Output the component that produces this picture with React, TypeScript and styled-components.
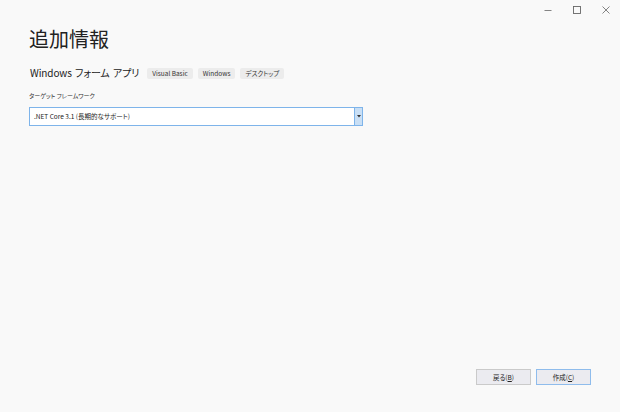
import React from "react";
import styled, { createGlobalStyle } from "styled-components";

const GlobalStyle = createGlobalStyle`
  html, body {
    margin: 0;
    padding: 0;
    background: #f9f9f9;
  }
  body {
    font-family: "Noto Sans CJK JP", "Noto Sans", sans-serif;
    font-feature-settings: "palt";
    color: #1e1e1e;
  }
`;

const Window = styled.div`
  width: 620px;
  height: 412px;
  background: #f9f9f9;
  display: flex;
  flex-direction: column;
  box-sizing: border-box;
`;

const TitleBar = styled.div`
  height: 20px;
  display: flex;
  justify-content: flex-end;
`;

const Control = styled.div`
  width: 29px;
  height: 20px;
  display: flex;
  align-items: center;
  justify-content: center;
`;

const Content = styled.div`
  flex: 1;
  padding: 6px 29px 0 29px;
  display: flex;
  flex-direction: column;
`;

const Title = styled.h1`
  margin: 0;
  font-size: 20px;
  font-weight: 400;
  line-height: 26px;
  color: #222;
`;

const TemplateRow = styled.div`
  margin-top: 14px;
  display: flex;
  align-items: center;
  height: 14px;
`;

const TemplateName = styled.span`
  font-size: 10px;
  line-height: 14px;
  margin-left: 1px;
  margin-right: 8px;
  color: #222;
  letter-spacing: -0.1px;
  word-spacing: 1px;
`;

const Tag = styled.span`
  background: #ececec;
  border-radius: 2px;
  font-size: 6.5px;
  line-height: 11px;
  height: 11px;
  padding: 0 5px;
  margin-right: 5px;
  color: #333;
  white-space: nowrap;
`;

const Label = styled.div`
  margin-top: 11px;
  font-size: 6px;
  line-height: 10px;
  color: #333;
`;

const Select = styled.div`
  margin-top: 6px;
  width: 334px;
  height: 19px;
  box-sizing: border-box;
  border: 1px solid #7eb4ea;
  background: #fff;
  display: flex;
  align-items: stretch;
`;

const SelectText = styled.div`
  flex: 1;
  padding-left: 4px;
  font-size: 6.5px;
  line-height: 17px;
  color: #222;
`;

const SelectButton = styled.div`
  width: 7px;
  border-left: 1px solid #7eb4ea;
  background: #c9dff5;
  display: flex;
  align-items: center;
  justify-content: center;
`;

const Spacer = styled.div`
  flex: 1;
`;

const Footer = styled.div`
  display: flex;
  justify-content: flex-end;
  gap: 5px;
  padding-bottom: 27px;
`;

const Button = styled.button<{ $primary?: boolean }>`
  width: 55px;
  height: 16px;
  box-sizing: border-box;
  padding: 0;
  border: 1px solid ${(p) => (p.$primary ? "#8fbcec" : "#cacaca")};
  background: #ebebf0;
  font-family: "Noto Sans CJK JP", "Noto Sans", sans-serif;
  font-feature-settings: "palt";
  font-size: 6.5px;
  line-height: 14px;
  color: #222;
  display: flex;
  align-items: center;
  justify-content: center;
`;

const Key = styled.span`
  text-decoration: underline;
`;

const App: React.FC = () => (
  <Window>
    <GlobalStyle />
    <TitleBar>
      <Control>
        <svg width="8" height="8" viewBox="0 0 8 8">
          <line x1="0.5" y1="4.5" x2="7.5" y2="4.5" stroke="#666" strokeWidth="0.8" />
        </svg>
      </Control>
      <Control>
        <svg width="8" height="8" viewBox="0 0 8 8">
          <rect x="0.5" y="0.5" width="7" height="7" fill="none" stroke="#666" strokeWidth="0.9" />
        </svg>
      </Control>
      <Control>
        <svg width="8" height="8" viewBox="0 0 8 8">
          <path d="M0.5 0.5 L7.5 7.5 M7.5 0.5 L0.5 7.5" stroke="#666" strokeWidth="0.8" />
        </svg>
      </Control>
    </TitleBar>
    <Content>
      <Title>追加情報</Title>
      <TemplateRow>
        <TemplateName>Windows フォーム アプリ</TemplateName>
        <Tag>Visual Basic</Tag>
        <Tag>Windows</Tag>
        <Tag>デスクトップ</Tag>
      </TemplateRow>
      <Label>ターゲット フレームワーク</Label>
      <Select>
        <SelectText>.NET Core 3.1 (長期的なサポート)</SelectText>
        <SelectButton>
          <svg width="4" height="3" viewBox="0 0 4 3">
            <path d="M0 0 L4 0 L2 2.5 Z" fill="#333" />
          </svg>
        </SelectButton>
      </Select>
      <Spacer />
      <Footer>
        <Button>
          戻る(<Key>B</Key>)
        </Button>
        <Button $primary>
          作成(<Key>C</Key>)
        </Button>
      </Footer>
    </Content>
  </Window>
);

export default App;
